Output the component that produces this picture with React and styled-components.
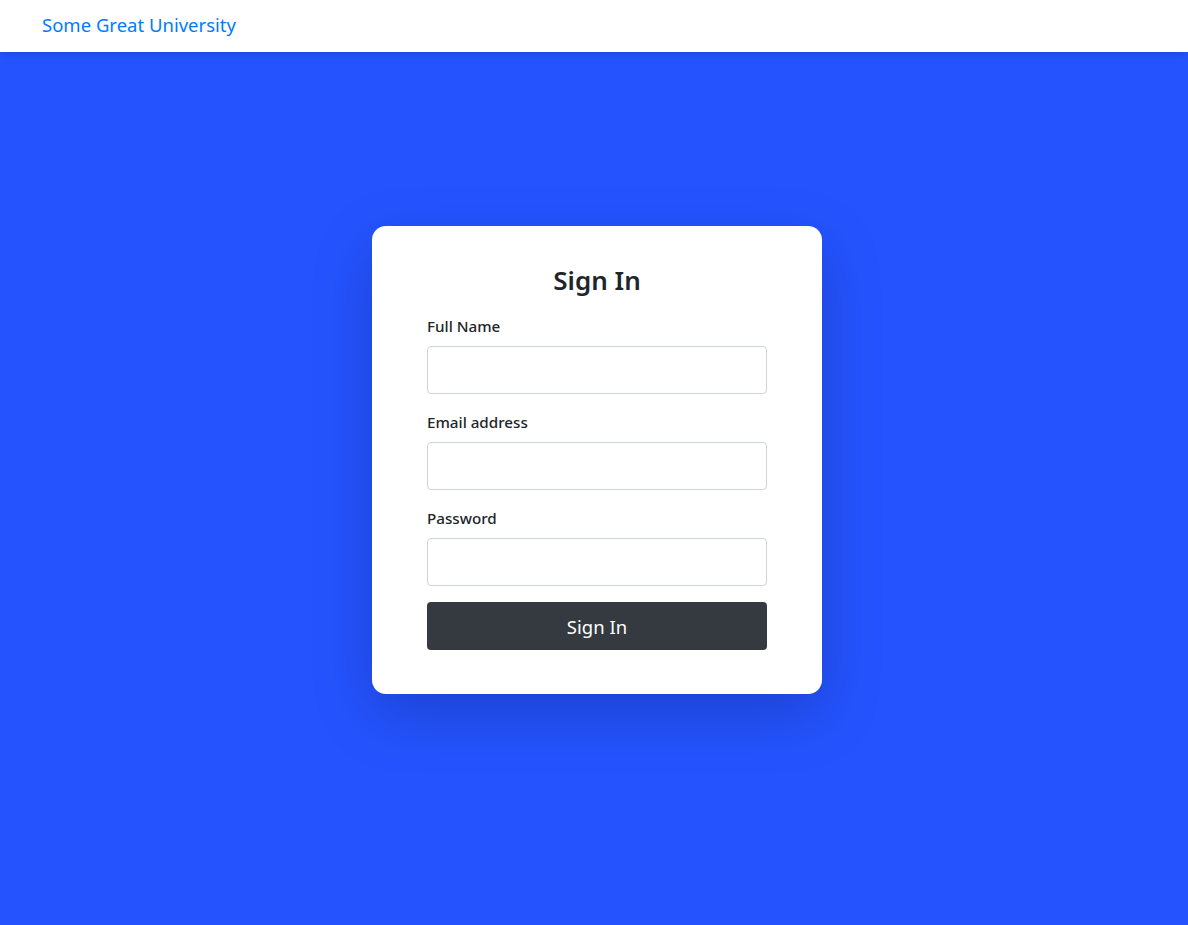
import React from 'react';
import styled, { createGlobalStyle } from 'styled-components';

const GlobalStyle = createGlobalStyle`
html, body {
  margin: 0;
  padding: 0;
  height: 100%;
}
body {
  font-family: "Noto Sans", "Open Sans", Arial, sans-serif;
  background-color: #2554ff;
  color: #212529;
}
#root {
  min-height: 100%;
}
`;

const App = () => {
    return (
        <Page>
            <GlobalStyle />
            <NavBar>
                <Brand href="#">Some Great University</Brand>
            </NavBar>
            <Main>
                <Card>
                    <Title>Sign In</Title>
                    <Field label="Full Name" type="text" />
                    <Field label="Email address" type="email" />
                    <Field label="Password" type="password" />
                    <SubmitButton type="button">Sign In</SubmitButton>
                </Card>
            </Main>
        </Page>
    );
};

const Field = ({ label, type }) => (
    <FieldGroup>
        <Label>{label}</Label>
        <Input type={type} />
    </FieldGroup>
);

const Page = styled.div`
display: flex;
flex-direction: column;
min-height: 925px;
background-color: #2554ff;
`;

const NavBar = styled.nav`
display: flex;
align-items: center;
height: 52px;
padding: 0 42px 2px;
box-sizing: border-box;
background-color: #fff;
box-shadow: 0 2px 10px rgba(0, 0, 0, 0.15);
position: relative;
z-index: 1;
`;

const Brand = styled.a`
color: #007bff;
font-size: 18.5px;
text-decoration: none;
line-height: 1;
`;

const Main = styled.main`
display: flex;
justify-content: center;
padding: 174px 0 0 6px;
`;

const Card = styled.div`
width: 450px;
box-sizing: border-box;
padding: 36px 55px 44px;
background-color: #fff;
border-radius: 14px;
box-shadow: 0 20px 60px rgba(0, 0, 40, 0.22);
display: flex;
flex-direction: column;
`;

const Title = styled.h1`
margin: 0 0 16px;
text-align: center;
font-size: 26px;
font-weight: 600;
line-height: 36px;
color: #212529;
`;

const FieldGroup = styled.div`
display: flex;
flex-direction: column;
gap: 8px;
margin-bottom: 16px;
`;

const Label = styled.label`
font-size: 15.2px;
font-weight: 500;
line-height: 24px;
`;

const Input = styled.input`
height: 48px;
box-sizing: border-box;
border: 1px solid #ced4da;
border-radius: 4px;
padding: 6px 12px;
font-size: 16px;
font-family: inherit;
outline: none;
`;

const SubmitButton = styled.button`
height: 48px;
border: none;
border-radius: 4px;
background-color: #343a40;
color: #fff;
font-family: inherit;
font-size: 18.5px;
cursor: pointer;
`;

export default App;
